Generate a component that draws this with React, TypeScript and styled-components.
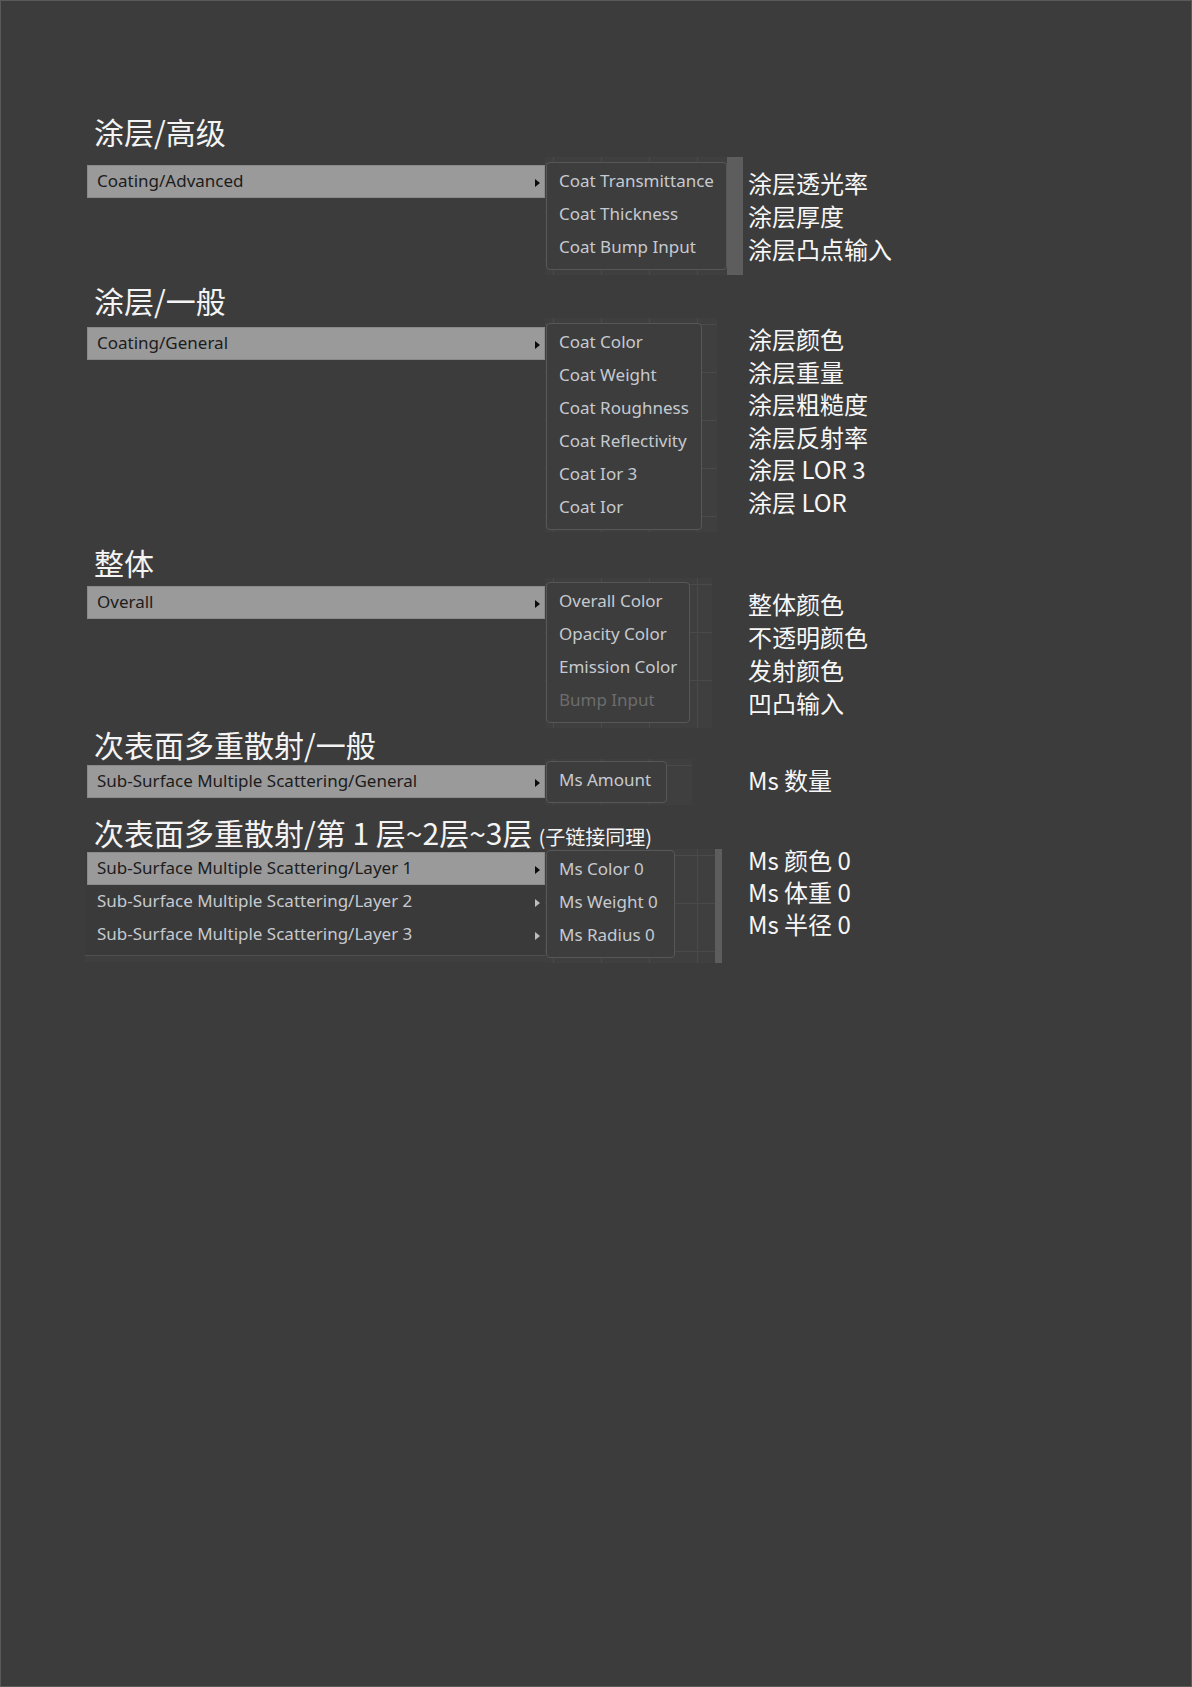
import React from "react";
import styled, { createGlobalStyle, css } from "styled-components";

const Global = createGlobalStyle`
  html, body { margin: 0; padding: 0; background: #3c3c3c; }
  #root { width: 1192px; }
`;

const gridBg = css`
  background-color: #3f3f3f;
  background-image:
    linear-gradient(to right, #4a4a4a 1px, transparent 1px),
    linear-gradient(to bottom, #4a4a4a 1px, transparent 1px);
  background-size: 48px 48px;
  background-position: 8px 6px;
`;

const Page = styled.div`
  box-sizing: border-box;
  width: 1192px;
  height: 1687px;
  border: 1px solid #5a5a5a;
  background: #3c3c3c;
  padding-top: 115px;
  overflow: hidden;
  font-family: "Noto Sans CJK SC", "Noto Sans", sans-serif;
`;

const Section = styled.section<{ $top: number }>`
  margin-top: ${(p) => p.$top}px;
`;

const Title = styled.h2`
  margin: 0;
  height: 30px;
  padding-left: 93px;
  font-family: "Noto Sans CJK SC", sans-serif;
  font-weight: 400;
  font-size: 30px;
  line-height: 30px;
  color: #f4f4f4;
  white-space: nowrap;
`;

const TitleNote = styled.span`
  font-size: 20px;
  line-height: 0;
  margin-left: 6px;
`;

const Row = styled.div<{ $top: number; $height: number }>`
  display: grid;
  grid-template-columns: 84px 460px 203px 1fr;
  align-items: start;
  margin-top: ${(p) => p.$top}px;
  height: ${(p) => p.$height}px;
`;

const LeftPanel = styled.div<{ $top: number; $list?: boolean }>`
  grid-column: 2;
  margin-top: ${(p) => p.$top}px;
  padding-left: 2px;
  display: flex;
  flex-direction: column;
  ${(p) =>
    p.$list &&
    css`
      background: #3a3a3a;
      padding-top: 2px;
      padding-bottom: 4px;
      border-bottom: 1px solid #505050;
      box-shadow: 0 6px 0 #3f3f3f;
    `}
`;

const MenuRow = styled.div<{ $selected?: boolean }>`
  display: flex;
  align-items: center;
  justify-content: space-between;
  height: 33px;
  box-sizing: border-box;
  padding: 0 5px 2px 10px;
  font-family: "Noto Sans", "Open Sans", sans-serif;
  font-size: 17px;
  white-space: nowrap;
  color: ${(p) => (p.$selected ? "#1c1c1c" : "#c6cad0")};
  background: ${(p) => (p.$selected ? "#9a9a9a" : "transparent")};
  box-shadow: ${(p) => (p.$selected ? "inset 0 0 0 1px #8a8a8a" : "none")};
`;

const Arrow = styled.span<{ $dark?: boolean }>`
  width: 0;
  height: 0;
  margin-top: 5px;
  border-top: 4px solid transparent;
  border-bottom: 4px solid transparent;
  border-left: 5px solid ${(p) => (p.$dark ? "#0c0c0c" : "#bdbdbd")};
`;

const Canvas = styled.div<{ $width: number; $height: number }>`
  grid-column: 3;
  display: flex;
  align-items: flex-start;
  width: ${(p) => p.$width}px;
  height: ${(p) => p.$height}px;
  ${gridBg}
`;

const SubMenu = styled.div<{ $top: number; $width: number }>`
  box-sizing: border-box;
  margin-top: ${(p) => p.$top}px;
  margin-left: 1px;
  width: ${(p) => p.$width}px;
  padding: 2px 0 5px;
  background: #3d3d3d;
  border: 1px solid #575757;
  border-radius: 4px;
  display: flex;
  flex-direction: column;
`;

const SubItem = styled.div<{ $disabled?: boolean }>`
  height: 33px;
  box-sizing: border-box;
  display: flex;
  align-items: center;
  padding: 0 0 2px 12px;
  font-family: "Noto Sans", "Open Sans", sans-serif;
  font-size: 17px;
  white-space: nowrap;
  color: ${(p) => (p.$disabled ? "#6c6c6c" : "#c6cad0")};
`;

const Spacer = styled.div`
  flex: 1;
`;

const Strip = styled.div<{ $width: number }>`
  align-self: stretch;
  width: ${(p) => p.$width}px;
  background: #5d5d5d;
`;

const Labels = styled.div<{ $top: number; $lh: number }>`
  grid-column: 4;
  margin-top: ${(p) => p.$top}px;
  display: flex;
  flex-direction: column;
  font-family: "Noto Sans CJK SC", sans-serif;
  font-size: 24px;
  line-height: ${(p) => p.$lh}px;
  color: #f7f7f7;
  white-space: nowrap;
`;

type Item = { t: string; disabled?: boolean };
type Sec = {
  title: React.ReactNode;
  top: number;
  rowTop: number;
  rowHeight: number;
  rows: { label: string; selected?: boolean }[];
  leftTop: number;
  list?: boolean;
  subTop: number;
  subWidth: number;
  canvasWidth: number;
  strip?: number;
  items: Item[];
  labelsTop: number;
  labelLh: number;
  labels: string[];
};

const sections: Sec[] = [
  {
    title: "涂层/高级",
    top: 0,
    rowTop: 11,
    rowHeight: 118,
    rows: [{ label: "Coating/Advanced", selected: true }],
    leftTop: 8,
    subTop: 5,
    subWidth: 181,
    canvasWidth: 198,
    strip: 16,
    items: [{ t: "Coat Transmittance" }, { t: "Coat Thickness" }, { t: "Coat Bump Input" }],
    labelsTop: 9,
    labelLh: 33,
    labels: ["涂层透光率", "涂层厚度", "涂层凸点输入"],
  },
  {
    title: "涂层/一般",
    top: 10,
    rowTop: 3,
    rowHeight: 214,
    rows: [{ label: "Coating/General", selected: true }],
    leftTop: 9,
    subTop: 5,
    subWidth: 156,
    canvasWidth: 172,
    items: [
      { t: "Coat Color" },
      { t: "Coat Weight" },
      { t: "Coat Roughness" },
      { t: "Coat Reflectivity" },
      { t: "Coat Ior 3" },
      { t: "Coat Ior" },
    ],
    labelsTop: 5,
    labelLh: 32.5,
    labels: ["涂层颜色", "涂层重量", "涂层粗糙度", "涂层反射率", "涂层 LOR 3", "涂层 LOR"],
  },
  {
    title: "整体",
    top: 15,
    rowTop: 1,
    rowHeight: 150,
    rows: [{ label: "Overall", selected: true }],
    leftTop: 8,
    subTop: 4,
    subWidth: 144,
    canvasWidth: 167,
    items: [
      { t: "Overall Color" },
      { t: "Opacity Color" },
      { t: "Emission Color" },
      { t: "Bump Input", disabled: true },
    ],
    labelsTop: 8.5,
    labelLh: 33,
    labels: ["整体颜色", "不透明颜色", "发射颜色", "凹凸输入"],
  },
  {
    title: "次表面多重散射/一般",
    top: 1,
    rowTop: 0,
    rowHeight: 46,
    rows: [{ label: "Sub-Surface Multiple Scattering/General", selected: true }],
    leftTop: 6,
    subTop: 2,
    subWidth: 121,
    canvasWidth: 147,
    items: [{ t: "Ms Amount" }],
    labelsTop: 3.5,
    labelLh: 33,
    labels: ["Ms 数量"],
  },
  {
    title: (
      <>
        次表面多重散射/第 1 层~2层~3层<TitleNote>(子链接同理)</TitleNote>
      </>
    ),
    top: 12,
    rowTop: 2,
    rowHeight: 114,
    rows: [
      { label: "Sub-Surface Multiple Scattering/Layer 1", selected: true },
      { label: "Sub-Surface Multiple Scattering/Layer 2" },
      { label: "Sub-Surface Multiple Scattering/Layer 3" },
    ],
    leftTop: 1,
    list: true,
    subTop: 1,
    subWidth: 129,
    canvasWidth: 177,
    strip: 7,
    items: [{ t: "Ms Color 0" }, { t: "Ms Weight 0" }, { t: "Ms Radius 0" }],
    labelsTop: -5.5,
    labelLh: 32,
    labels: ["Ms 颜色 0", "Ms 体重 0", "Ms 半径 0"],
  },
];

export default function App() {
  return (
    <>
      <Global />
      <Page>
        {sections.map((s, i) => (
          <Section key={i} $top={s.top}>
            <Title>{s.title}</Title>
            <Row $top={s.rowTop} $height={s.rowHeight}>
              <LeftPanel $top={s.leftTop} $list={s.list}>
                {s.rows.map((r) => (
                  <MenuRow key={r.label} $selected={r.selected}>
                    <span>{r.label}</span>
                    <Arrow $dark={r.selected} />
                  </MenuRow>
                ))}
              </LeftPanel>
              <Canvas $width={s.canvasWidth} $height={s.rowHeight}>
                <SubMenu $top={s.subTop} $width={s.subWidth}>
                  {s.items.map((it) => (
                    <SubItem key={it.t} $disabled={it.disabled}>
                      {it.t}
                    </SubItem>
                  ))}
                </SubMenu>
                <Spacer />
                {s.strip ? <Strip $width={s.strip} /> : null}
              </Canvas>
              <Labels $top={s.labelsTop} $lh={s.labelLh}>
                {s.labels.map((l) => (
                  <span key={l}>{l}</span>
                ))}
              </Labels>
            </Row>
          </Section>
        ))}
      </Page>
    </>
  );
}
